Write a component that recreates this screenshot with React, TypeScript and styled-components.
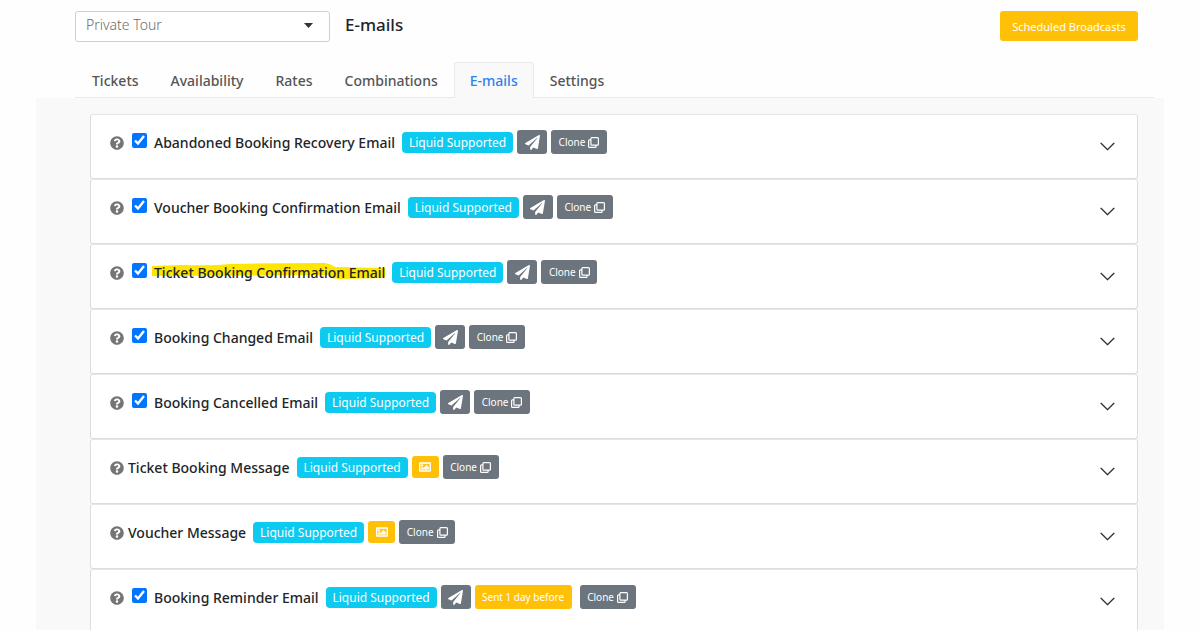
import React from "react";
import styled, { createGlobalStyle } from "styled-components";
import { FaQuestionCircle, FaPaperPlane, FaRegImage } from "react-icons/fa";
import { BsChevronDown } from "react-icons/bs";

const GlobalStyle = createGlobalStyle`
  *, *::before, *::after { box-sizing: border-box; }
  body {
    margin: 0;
    background: #fefefe;
    color: #212529;
    font-family: "Noto Sans", "Open Sans", sans-serif;
    font-size: 14px;
  }
  button, select, input { font-family: inherit; margin: 0; }
`;

const Page = styled.div`
  height: 100vh;
  overflow: hidden;
  padding: 0 36px;
`;

const Header = styled.header`
  display: flex;
  align-items: flex-start;
  padding: 11px 26px 0 39px;
`;

const SelectWrap = styled.div`
  position: relative;
  width: 255px;
  margin-right: 15px;
`;

const TourSelect = styled.select`
  appearance: none;
  display: block;
  width: 100%;
  height: 31px;
  padding: 0 32px 4px 10px;
  border: 1px solid #cfcfcf;
  border-radius: 3px;
  background: #fff;
  color: #6c6c6c;
  font-size: 14px;
  font-weight: 300;
`;

const Caret = styled.svg`
  position: absolute;
  top: 12px;
  right: 17px;
  pointer-events: none;
`;

const Heading = styled.h1`
  flex: 1;
  margin: 0;
  font-size: 17px;
  line-height: 28px;
  font-weight: 500;
`;

const BroadcastButton = styled.button`
  height: 30px;
  width: 138px;
  padding: 0;
  border: 0;
  border-radius: 3px;
  background: #ffc107;
  color: #fff;
  font-size: 11px;
`;

const Tabs = styled.nav`
  display: flex;
  margin: 20px 10px 0 39px;
  padding-left: 1px;
  border-bottom: 1px solid #e9e9e9;
`;

const Tab = styled.a<{ $active?: boolean }>`
  height: 36px;
  margin-bottom: -1px;
  padding: 0 15px;
  border: 1px solid ${(p) => (p.$active ? "#e9e9e9" : "transparent")};
  border-bottom: 0;
  border-radius: 3px 3px 0 0;
  background: ${(p) => (p.$active ? "#f9f9f9" : "transparent")};
  color: ${(p) => (p.$active ? "#2f80ed" : "#555")};
  font-weight: 500;
  line-height: 36px;
  text-decoration: none;
`;

const Panel = styled.main`
  padding: 16px 26px 0 54px;
  background: #f9f9f9;
`;

const Card = styled.section`
  display: flex;
  align-items: center;
  justify-content: space-between;
  border: 1px solid #dcdcdc;
  border-top-color: #e6e6e6;
  border-radius: 3px;
  background: #fff;
  padding-right: 21px;
`;

const CardContent = styled.div`
  display: flex;
  align-items: center;
  gap: 4px;
  padding: 15px 0 24px 19px;
  height: 63px;
`;

const HelpButton = styled.button`
  display: flex;
  padding: 1px 0 0;
  border: 0;
  background: none;
  color: #757575;
  font-size: 14px;
`;

const Check = styled.input`
  width: 15px;
  height: 15px;
  align-self: flex-start;
  margin: 3px 3px 0 4px;
  accent-color: #0075ff;
`;

const Title = styled.label`
  position: relative;
  z-index: 0;
  margin-right: 3px;
  padding-top: 2px;
  font-weight: 500;
  line-height: 24px;
  white-space: nowrap;
`;

const Marker = styled.svg`
  position: absolute;
  z-index: -1;
  top: 4px;
  left: -2px;
  width: calc(100% + 2px);
  height: 17px;
`;

const Badge = styled.span`
  width: 111px;
  height: 21px;
  border-radius: 4px;
  background: #0dcaf0;
  color: #fff;
  font-size: 12px;
  line-height: 21px;
  text-align: center;
  white-space: nowrap;
`;

const Action = styled.button<{ $width: number; $warning?: boolean; $small?: boolean; $spaced?: boolean }>`
  display: flex;
  align-items: center;
  justify-content: center;
  gap: 3px;
  width: ${(p) => p.$width}px;
  height: ${(p) => (p.$small ? 22 : 24)}px;
  margin-right: ${(p) => (p.$spaced ? 4 : 0)}px;
  padding: 0;
  border: 0;
  border-radius: 3px;
  background: ${(p) => (p.$warning ? "#ffc107" : "#6c757d")};
  color: #fff;
  font-size: 10px;
  white-space: nowrap;
`;

const Toggle = styled.button`
  display: flex;
  padding: 0;
  border: 0;
  background: none;
  color: #212529;
`;

type Email = { title: string; message?: boolean; marked?: boolean; schedule?: string };

const emails: Email[] = [
  { title: "Abandoned Booking Recovery Email" },
  { title: "Voucher Booking Confirmation Email" },
  { title: "Ticket Booking Confirmation Email", marked: true },
  { title: "Booking Changed Email" },
  { title: "Booking Cancelled Email" },
  { title: "Ticket Booking Message", message: true },
  { title: "Voucher Message", message: true },
  { title: "Booking Reminder Email", schedule: "Sent 1 day before" },
];

const tabs = ["Tickets", "Availability", "Rates", "Combinations", "E-mails", "Settings"];

function CloneIcon() {
  return (
    <svg width="11" height="11" viewBox="0 0 11 11" fill="none" stroke="currentColor" strokeWidth="1.2" aria-hidden="true">
      <rect x="2.9" y="0.6" width="7.5" height="7.5" rx="0.9" />
      <path d="M2.9 2.9H1.5Q0.6 2.9 0.6 3.8V9.5Q0.6 10.4 1.5 10.4H7.2Q8.1 10.4 8.1 9.5V8.1" />
    </svg>
  );
}

function EmailCard({ email, id }: { email: Email; id: string }) {
  return (
    <Card>
      <CardContent>
        <HelpButton aria-label={`Help: ${email.title}`}><FaQuestionCircle /></HelpButton>
        {!email.message && <Check type="checkbox" id={id} defaultChecked />}
        <Title as={email.message ? "span" : "label"} htmlFor={email.message ? undefined : id}>
          {email.marked && (
            <Marker viewBox="0 0 232 17" preserveAspectRatio="none" aria-hidden="true">
              <path d="M0 3 L30 2 Q60 3 78 1 Q120 0 172 0 Q178 1 182 4 L232 5 V15 L185 16 Q178 15 175 12 L0 13 Z" fill="#ffe600" />
            </Marker>
          )}
          {email.title}
        </Title>
        <Badge>Liquid Supported</Badge>
        {email.message ? (
          <Action $width={27} $warning $small aria-label="Image">
            <FaRegImage size={12} stroke="currentColor" strokeWidth={24} />
          </Action>
        ) : (
          <Action $width={30} aria-label="Send"><FaPaperPlane size={15} /></Action>
        )}
        {email.schedule && <Action $width={97} $warning $spaced>{email.schedule}</Action>}
        <Action $width={56}>Clone <CloneIcon /></Action>
      </CardContent>
      <Toggle aria-label={`Expand ${email.title}`}><BsChevronDown size={17} strokeWidth={0.3} /></Toggle>
    </Card>
  );
}

export default function App() {
  return (
    <Page>
      <GlobalStyle />
      <Header>
        <SelectWrap>
          <TourSelect aria-label="Tour" defaultValue="Private Tour">
            <option>Private Tour</option>
          </TourSelect>
          <Caret width="9" height="5" viewBox="0 0 9 5" aria-hidden="true">
            <path d="M0 0H9L4.5 5Z" fill="#333" />
          </Caret>
        </SelectWrap>
        <Heading>E-mails</Heading>
        <BroadcastButton>Scheduled Broadcasts</BroadcastButton>
      </Header>
      <Tabs>
        {tabs.map((tab) => (
          <Tab key={tab} href="#" $active={tab === "E-mails"}>{tab}</Tab>
        ))}
      </Tabs>
      <Panel>
        {emails.map((email, i) => (
          <EmailCard key={email.title} email={email} id={`email-${i}`} />
        ))}
      </Panel>
    </Page>
  );
}
